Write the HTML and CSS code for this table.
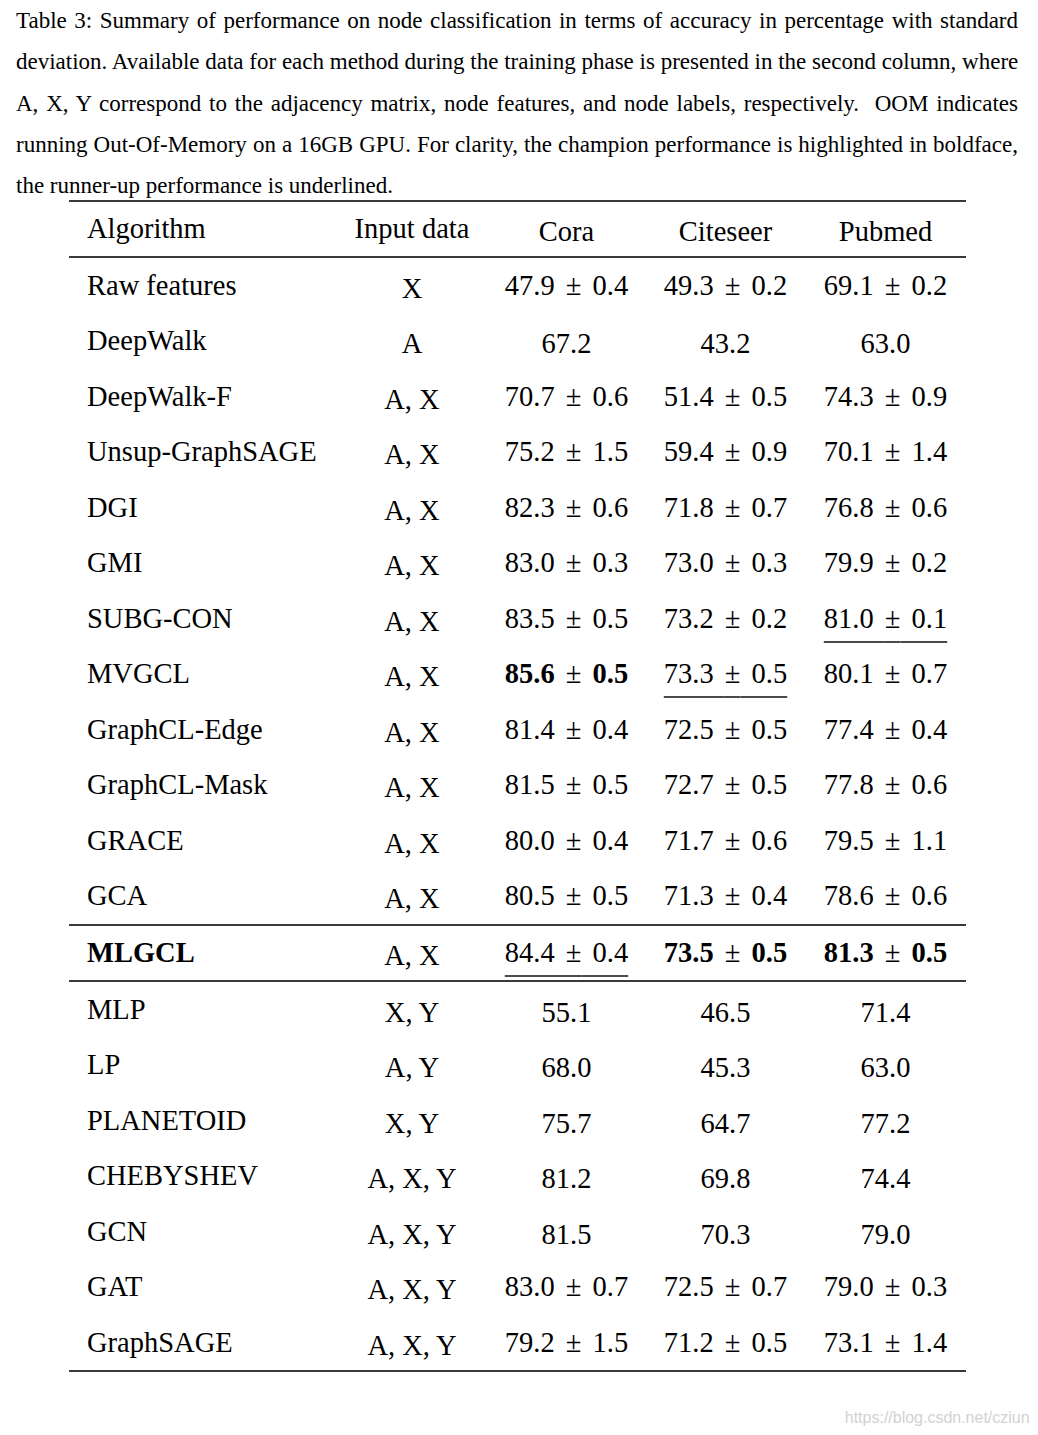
FILE: index.html
```html
<!DOCTYPE html>
<html lang="en">
<head>
<meta charset="utf-8">
<title>Table 3</title>
<link rel="stylesheet" href="styles.css">
</head>
<body>
<div class="page">
  <p class="caption">
    <span class="ln">Table 3: Summary of performance on node classification in terms of accuracy in percentage with standard</span>
    <span class="ln">deviation. Available data for each method during the training phase is presented in the second column, where</span>
    <span class="ln">A, X, Y correspond to the adjacency matrix, node features, and node labels, respectively.&nbsp; OOM indicates</span>
    <span class="ln">running Out-Of-Memory on a 16GB GPU. For clarity, the champion performance is highlighted in boldface,</span>
    <span class="ln last">the runner-up performance is underlined.</span>
  </p>

  <div class="table">
    <div class="row head">
      <div class="c name">Algorithm</div>
      <div class="c">Input data</div>
      <div class="c low-h">Cora</div>
      <div class="c low-h">Citeseer</div>
      <div class="c low-h">Pubmed</div>
    </div>

    <div class="group">
      <div class="row">
        <div class="c name">Raw features</div>
        <div class="c low">X</div>
        <div class="c v">47.9 <span class="pm">±</span> 0.4</div>
        <div class="c v">49.3 <span class="pm">±</span> 0.2</div>
        <div class="c v">69.1 <span class="pm">±</span> 0.2</div>
      </div>
      <div class="row">
        <div class="c name">DeepWalk</div>
        <div class="c low">A</div>
        <div class="c low">67.2</div>
        <div class="c low">43.2</div>
        <div class="c low">63.0</div>
      </div>
      <div class="row">
        <div class="c name">DeepWalk-F</div>
        <div class="c low">A, X</div>
        <div class="c v">70.7 <span class="pm">±</span> 0.6</div>
        <div class="c v">51.4 <span class="pm">±</span> 0.5</div>
        <div class="c v">74.3 <span class="pm">±</span> 0.9</div>
      </div>
      <div class="row">
        <div class="c name">Unsup-GraphSAGE</div>
        <div class="c low">A, X</div>
        <div class="c v">75.2 <span class="pm">±</span> 1.5</div>
        <div class="c v">59.4 <span class="pm">±</span> 0.9</div>
        <div class="c v">70.1 <span class="pm">±</span> 1.4</div>
      </div>
      <div class="row">
        <div class="c name">DGI</div>
        <div class="c low">A, X</div>
        <div class="c v">82.3 <span class="pm">±</span> 0.6</div>
        <div class="c v">71.8 <span class="pm">±</span> 0.7</div>
        <div class="c v">76.8 <span class="pm">±</span> 0.6</div>
      </div>
      <div class="row">
        <div class="c name">GMI</div>
        <div class="c low">A, X</div>
        <div class="c v">83.0 <span class="pm">±</span> 0.3</div>
        <div class="c v">73.0 <span class="pm">±</span> 0.3</div>
        <div class="c v">79.9 <span class="pm">±</span> 0.2</div>
      </div>
      <div class="row">
        <div class="c name">SUBG-CON</div>
        <div class="c low">A, X</div>
        <div class="c v">83.5 <span class="pm">±</span> 0.5</div>
        <div class="c v">73.2 <span class="pm">±</span> 0.2</div>
        <div class="c v"><span class="ul">81.0 <span class="pm">±</span> 0.1</span></div>
      </div>
      <div class="row">
        <div class="c name">MVGCL</div>
        <div class="c low">A, X</div>
        <div class="c v"><b>85.6</b> <span class="pm">±</span> <b>0.5</b></div>
        <div class="c v"><span class="ul">73.3 <span class="pm">±</span> 0.5</span></div>
        <div class="c v">80.1 <span class="pm">±</span> 0.7</div>
      </div>
      <div class="row">
        <div class="c name">GraphCL-Edge</div>
        <div class="c low">A, X</div>
        <div class="c v">81.4 <span class="pm">±</span> 0.4</div>
        <div class="c v">72.5 <span class="pm">±</span> 0.5</div>
        <div class="c v">77.4 <span class="pm">±</span> 0.4</div>
      </div>
      <div class="row">
        <div class="c name">GraphCL-Mask</div>
        <div class="c low">A, X</div>
        <div class="c v">81.5 <span class="pm">±</span> 0.5</div>
        <div class="c v">72.7 <span class="pm">±</span> 0.5</div>
        <div class="c v">77.8 <span class="pm">±</span> 0.6</div>
      </div>
      <div class="row">
        <div class="c name">GRACE</div>
        <div class="c low">A, X</div>
        <div class="c v">80.0 <span class="pm">±</span> 0.4</div>
        <div class="c v">71.7 <span class="pm">±</span> 0.6</div>
        <div class="c v">79.5 <span class="pm">±</span> 1.1</div>
      </div>
      <div class="row">
        <div class="c name">GCA</div>
        <div class="c low">A, X</div>
        <div class="c v">80.5 <span class="pm">±</span> 0.5</div>
        <div class="c v">71.3 <span class="pm">±</span> 0.4</div>
        <div class="c v">78.6 <span class="pm">±</span> 0.6</div>
      </div>
    </div>

    <div class="row ours">
      <div class="c name"><b>MLGCL</b></div>
      <div class="c low">A, X</div>
      <div class="c v"><span class="ul">84.4 <span class="pm">±</span> 0.4</span></div>
      <div class="c v"><b>73.5</b> <span class="pm">±</span> <b>0.5</b></div>
      <div class="c v"><b>81.3</b> <span class="pm">±</span> <b>0.5</b></div>
    </div>

    <div class="group last-group">
      <div class="row">
        <div class="c name">MLP</div>
        <div class="c low">X, Y</div>
        <div class="c low">55.1</div>
        <div class="c low">46.5</div>
        <div class="c low">71.4</div>
      </div>
      <div class="row">
        <div class="c name">LP</div>
        <div class="c low">A, Y</div>
        <div class="c low">68.0</div>
        <div class="c low">45.3</div>
        <div class="c low">63.0</div>
      </div>
      <div class="row">
        <div class="c name">PLANETOID</div>
        <div class="c low">X, Y</div>
        <div class="c low">75.7</div>
        <div class="c low">64.7</div>
        <div class="c low">77.2</div>
      </div>
      <div class="row">
        <div class="c name">CHEBYSHEV</div>
        <div class="c low">A, X, Y</div>
        <div class="c low">81.2</div>
        <div class="c low">69.8</div>
        <div class="c low">74.4</div>
      </div>
      <div class="row">
        <div class="c name">GCN</div>
        <div class="c low">A, X, Y</div>
        <div class="c low">81.5</div>
        <div class="c low">70.3</div>
        <div class="c low">79.0</div>
      </div>
      <div class="row">
        <div class="c name">GAT</div>
        <div class="c low">A, X, Y</div>
        <div class="c v">83.0 <span class="pm">±</span> 0.7</div>
        <div class="c v">72.5 <span class="pm">±</span> 0.7</div>
        <div class="c v">79.0 <span class="pm">±</span> 0.3</div>
      </div>
      <div class="row">
        <div class="c name">GraphSAGE</div>
        <div class="c low">A, X, Y</div>
        <div class="c v">79.2 <span class="pm">±</span> 1.5</div>
        <div class="c v">71.2 <span class="pm">±</span> 0.5</div>
        <div class="c v">73.1 <span class="pm">±</span> 1.4</div>
      </div>
    </div>
  </div>

  <div class="watermark">https://blog.csdn.net/cziun</div>
</div>
</body>
</html>
```

FILE: styles.css
```css
* {
  box-sizing: content-box;
}

html, body {
  margin: 0;
  padding: 0;
  background: #ffffff;
}

.page {
  position: relative;
  width: 1038px;
  height: 1435px;
  color: #000000;
  font-family: "Liberation Serif", "Times New Roman", serif;
}

.caption {
  margin: 0;
  padding: 0 20px 0 16px;
  width: 1002px;
  font-size: 23px;
  line-height: 41.3px;
}

.caption .ln {
  display: block;
  white-space: nowrap;
  text-align: justify;
  text-align-last: justify;
}

.caption .ln.last {
  text-align: left;
  text-align-last: left;
}

.table {
  margin: -6.5px 0 0 69px;
  width: 897px;
  border-top: 2px solid #3a3a3a;
  font-size: 28.5px;
}

.row {
  display: grid;
  grid-template-columns: 268px 150px 159px 159px 161px;
  align-items: center;
  height: 55.5px;
  line-height: 32px;
  white-space: nowrap;
}

.row.head {
  height: 54px;
  border-bottom: 2px solid #3a3a3a;
}

.row.ours {
  height: 54px;
  border-bottom: 2px solid #3a3a3a;
  border-top: 2px solid #3a3a3a;
}

.last-group {
  border-bottom: 2px solid #3a3a3a;
}

.c {
  text-align: center;
}

.c.name {
  text-align: left;
  padding-left: 18px;
}

.c.low {
  padding-top: 6px;
}

.c.low-h {
  padding-top: 7px;
}

.c.v {
  word-spacing: 4px;
}

.pm {
  font-weight: normal;
}

b {
  font-weight: bold;
}

.ul {
  text-decoration: underline;
  text-decoration-color: #4a4a4a;
  text-decoration-thickness: 2px;
  text-underline-offset: 13px;
  text-decoration-skip-ink: none;
}

.watermark {
  position: absolute;
  right: 8px;
  top: 1408px;
  font-family: "Liberation Sans", Arial, sans-serif;
  font-size: 17px;
  line-height: 20px;
  color: #d2d2d2;
  transform: scaleX(0.94);
  transform-origin: right center;
}
```
